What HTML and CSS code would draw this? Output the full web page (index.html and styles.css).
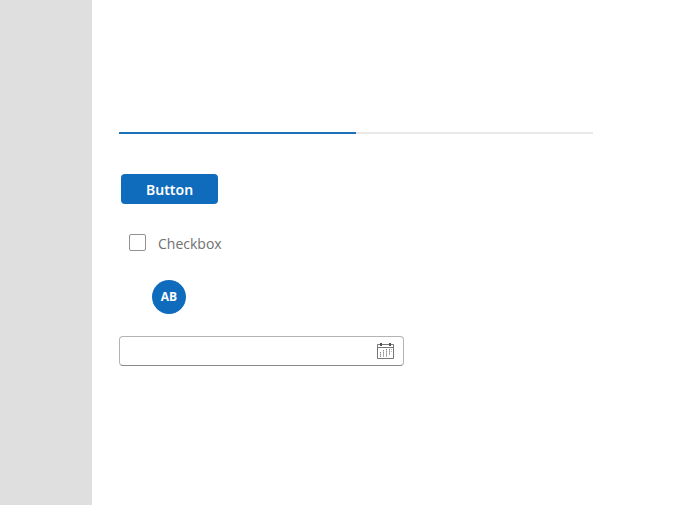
FILE: index.html
```html
<!DOCTYPE html>
<html lang="en">
<head>
<meta charset="utf-8">
<meta name="viewport" content="width=device-width, initial-scale=1">
<title>Components</title>
<link rel="stylesheet" href="styles.css">
</head>
<body>
<div class="page">
  <aside class="sidebar"></aside>
  <main class="content">
    <progress class="progress" value="50" max="100" aria-label="Progress"></progress>
    <button class="button" type="button">Button</button>
    <label class="check"><input class="check-box" type="checkbox"><span>Checkbox</span></label>
    <div class="avatar">AB</div>
    <div class="date-field">
      <input class="date-input" type="text" aria-label="Date">
      <button class="date-button" type="button" aria-label="Open calendar">
        <svg class="date-icon" viewBox="0 0 18 18" fill="none" stroke="#777" aria-hidden="true">
          <path d="M.5 2.500h16v14H.5z"/>
          <path d="M1 5.500h15"/>
          <path d="M4 1v3M13 1v3" stroke="#555" stroke-width="2"/>
          <path d="M3.500 10v5M6.500 8v7M9.500 7v8M12.500 7v6" stroke="#888" stroke-dasharray="1.500 .6"/>
          <path d="M14.500 7v4" stroke="#bbb" stroke-dasharray="1 1"/>
        </svg>
      </button>
    </div>
  </main>
</div>
</body>
</html>
```

FILE: styles.css
```css
* {
  box-sizing: border-box;
}

body {
  margin: 0;
  background: #fff;
  color: #707070;
  font-family: "Noto Sans", "Open Sans", sans-serif;
  font-size: 14px;
  line-height: 20px;
}

.page {
  display: grid;
  grid-template-columns: 92px 1fr;
  min-height: 100vh;
}

.sidebar {
  background: #dfdfdf;
}

.content {
  display: flex;
  flex-direction: column;
  align-items: flex-start;
  padding: 132px 107px 32px 27px;
}

.progress {
  appearance: none;
  display: block;
  width: 100%;
  height: 2px;
  border: 0;
  background: #e8e8e8;
}

.progress::-webkit-progress-bar {
  background: #e8e8e8;
}

.progress::-webkit-progress-value {
  background: #1c70b8;
}

.button {
  height: 30px;
  margin: 40px 0 0 2px;
  padding: 2px 25px 0;
  border: 0;
  border-radius: 4px;
  background: #0f6cbd;
  color: #fff;
  font: 600 14px/20px "Noto Sans", sans-serif;
}

.check {
  display: flex;
  align-items: flex-start;
  gap: 12px;
  margin: 30px 0 0 10px;
  font-family: "Open Sans", sans-serif;
}

.check-box {
  appearance: none;
  width: 17px;
  height: 17px;
  margin: 0;
  border: 1px solid #929292;
  border-radius: 2px;
  background: #fff;
}

.check-box:checked {
  background: #0f6cbd;
}

.avatar {
  display: flex;
  align-items: center;
  justify-content: center;
  width: 34px;
  height: 34px;
  margin: 26px 0 0 33px;
  border-radius: 50%;
  background: #0f6cbd;
  color: #fff;
  font-family: "Open Sans", sans-serif;
  font-size: 12px;
  font-weight: 700;
}

.date-field {
  display: flex;
  align-items: center;
  width: 60.2%;
  height: 30px;
  margin-top: 22px;
  padding-right: 8px;
  border: 1px solid #b4b4b4;
  border-bottom-color: #8a8a8a;
  border-radius: 4px;
}

.date-input {
  flex: 1;
  min-width: 0;
  padding: 0 8px;
  border: 0;
  outline: 0;
  background: transparent;
  color: #444;
  font: inherit;
}

.date-button {
  display: flex;
  padding: 0;
  border: 0;
  background: transparent;
}

.date-icon {
  width: 18px;
  height: 18px;
}
```
